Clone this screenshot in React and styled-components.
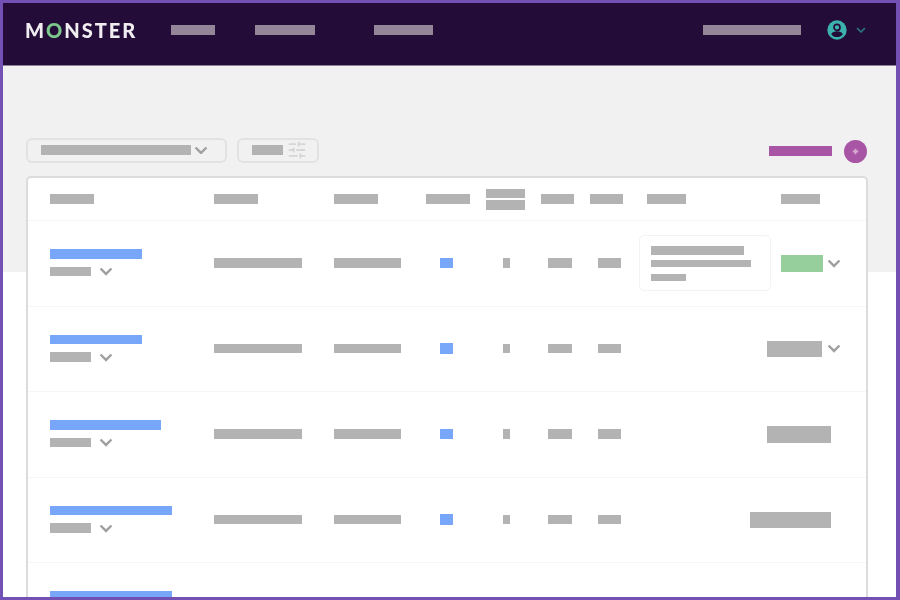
import React from "react";
import styled, { createGlobalStyle } from "styled-components";
import { SlidersHorizontal } from "lucide-react";

const rows = [
  { link: 92, status: { w: 42, h: 16.5, green: true, chevron: true }, note: true },
  { link: 92, status: { w: 54.5, h: 16.5, chevron: true, gap: 5.5 } },
  { link: 111, status: { w: 64, h: 16.5, pr: 10 } },
  { link: 122, status: { w: 81, h: 16.5, pr: 10 } },
  { link: 122 },
];

const heads = [
  { w: 44 },
  { w: 44 },
  { w: 44 },
  { w: 44 },
  { w: 39, double: true },
  { w: 32.5 },
  { w: 32.5 },
  { w: 38.5 },
  { w: 38.5 },
];

const Chevron = ({ size = 14, color = "#a0a0a0", stroke = 2.4 }) => (
  <ChevronSvg width={size} height={size * 0.64} viewBox="0 0 14 9" fill="none">
    <polyline points="1.5,1.5 7,7 12.5,1.5" stroke={color} strokeWidth={stroke} />
  </ChevronSvg>
);

const UserIcon = () => (
  <svg width="20" height="20" viewBox="0 0 20 20">
    <circle cx="10" cy="10" r="9.7" fill="#3db2ad" />
    <circle cx="10" cy="7.4" r="3" fill="#3db2ad" stroke="#230c37" strokeWidth="1.7" />
    <path d="M4.2 14.2c1-2.2 3.2-3 5.8-3s4.800.8 5.800 3c-1.400 1.900-3.400 2.900-5.800 2.900s-4.400-1-5.800-2.900z" fill="#230c37" />
  </svg>
);

const App = () => {
  return (
    <Frame>
      <GlobalStyle />
      <Content>
        <TopBar>
          <Logo>
            M<LogoO>O</LogoO>NSTER
          </Logo>
          <NavItems>
            <NavBar $w={44} />
            <NavBar $w={60} />
            <NavBar $w={59} $ml={19} />
          </NavItems>
          <Account>
            <NavBar $w={98} />
            <UserIcon />
            <Chevron size={10} color="#2b6f7c" stroke={2.4} />
          </Account>
        </TopBar>

        <Main>
          <Toolbar>
            <SelectBox>
              <GreyBar $w={150} $h={9.5} />
              <Chevron />
            </SelectBox>
            <FilterBox>
              <GreyBar $w={31} $h={9.5} />
              <SlidersHorizontal size={20} color="#d6d6d6" strokeWidth={2.2} />
            </FilterBox>
            <AddAction>
              <AddBar />
              <AddButton>
                <svg width="7" height="7" viewBox="0 0 7 7">
                  <path d="M3.500.8v5.400M.8 3.500h5.400" stroke="#d9a9d6" strokeWidth="1.8" />
                </svg>
              </AddButton>
            </AddAction>
          </Toolbar>

          <Card>
            <HeadRow>
              {heads.map((h, i) => (
                <HeadCell key={i}>
                  <GreyBar $w={h.w} $h={9.5} />
                  {h.double && <GreyBar $w={h.w} $h={9.5} />}
                </HeadCell>
              ))}
            </HeadRow>

            {rows.map((row, i) => (
              <Row key={i}>
                <TitleCell>
                  <LinkBar $w={row.link} />
                  <SubLine>
                    <GreyBar $w={41} $h={9.5} />
                    <Chevron />
                  </SubLine>
                </TitleCell>
                <GreyBar $w={88} $h={9.5} />
                <GreyBar $w={67} $h={9.5} />
                <BlueSquare />
                <GreyBar $w={7.5} $h={9.5} $ml={16.5} />
                <GreyBar $w={23.5} $h={9.5} $ml={7} />
                <GreyBar $w={23.5} $h={9.5} $ml={7.5} />
                <div>
                  {row.note && (
                    <Note>
                      <GreyBar $w={93} $h={9} />
                      <NoteGap />
                      <GreyBar $w={100} $h={7} />
                      <NoteGap $wide />
                      <GreyBar $w={35} $h={7} />
                    </Note>
                  )}
                </div>
                {row.status && (
                  <StatusCell $gap={row.status.gap} $pr={row.status.pr}>
                    <StatusPill $w={row.status.w} $h={row.status.h} $green={row.status.green} />
                    {row.status.chevron && <Chevron />}
                  </StatusCell>
                )}
              </Row>
            ))}
          </Card>
        </Main>
      </Content>
    </Frame>
  );
};

export default App;

const GlobalStyle = createGlobalStyle`
  html, body {
    margin: 0;
    padding: 0;
    background: #fff;
  }
`;

const Frame = styled.div`
  box-sizing: border-box;
  width: 900px;
  height: 600px;
  overflow: hidden;
  border-style: solid;
  border-color: #7350b3;
  border-width: 3px 4px 3px 3px;
  background: linear-gradient(#f1f1f1 0, #f1f1f1 269px, #fff 269px);
`;

/* runs past the frame so the soft edge of the blur gets clipped */
const Content = styled.div`
  margin: -3px -4px 0 -3px;
  filter: blur(0.6px);
`;

const TopBar = styled.header`
  box-sizing: border-box;
  height: 66px;
  display: flex;
  align-items: center;
  padding: 3px 34px 8px 25px;
  background: #230c37;
  border-bottom: 1px solid #8d8298;
`;

const Logo = styled.div`
  width: 146px;
  font-family: "Lato", "Liberation Sans", sans-serif;
  font-weight: 900;
  font-size: 20px;
  letter-spacing: 2px;
  color: #efedf0;
`;

const LogoO = styled.span`
  color: #7cc78a;
`;

const NavItems = styled.nav`
  display: flex;
  gap: 40px;
`;

const NavBar = styled.div`
  width: ${(p) => p.$w}px;
  height: 9.5px;
  margin-left: ${(p) => p.$ml || 0}px;
  background: #948598;
`;

const Account = styled.div`
  margin-left: auto;
  display: flex;
  align-items: center;

  & > svg:nth-of-type(1) {
    margin-left: 26px;
  }
  & > svg:nth-of-type(2) {
    margin-left: 9px;
  }
`;

const ChevronSvg = styled.svg`
  display: block;
  flex: none;
`;

const Main = styled.main`
  padding: 71px 32px 0 26px;
`;

const Toolbar = styled.div`
  display: flex;
  align-items: center;
  height: 26px;
  margin-bottom: 13px;
`;

const SelectBox = styled.div`
  box-sizing: border-box;
  width: 201px;
  height: 25px;
  display: flex;
  align-items: center;
  gap: 3px;
  padding-left: 13px;
  border: 2px solid #e2e2e2;
  border-radius: 6px;
`;

const FilterBox = styled(SelectBox)`
  width: 82px;
  margin-left: 10px;
  gap: 4px;
`;

const AddAction = styled.div`
  margin-left: auto;
  margin-top: 2px;
  margin-right: 1px;
  display: flex;
  align-items: center;
  gap: 12px;
`;

const AddBar = styled.div`
  width: 63px;
  height: 10px;
  background: #a855a5;
`;

const AddButton = styled.div`
  width: 23px;
  height: 23px;
  border-radius: 50%;
  background: #a855a5;
  display: flex;
  align-items: center;
  justify-content: center;
`;

const GreyBar = styled.div`
  flex: none;
  width: ${(p) => p.$w}px;
  height: ${(p) => p.$h}px;
  margin-left: ${(p) => p.$ml || 0}px;
  background: #b3b3b3;
`;

const Card = styled.section`
  background: #fff;
  border: 2px solid #dcdcdc;
  border-bottom: none;
  border-radius: 5px 5px 0 0;
`;

const columns = "164px 120px 92px 60px 55px 49px 57px 134px 60px";

const HeadRow = styled.div`
  box-sizing: border-box;
  display: grid;
  grid-template-columns: ${columns};
  align-items: center;
  height: 43px;
  padding-left: 22px;
  border-bottom: 1px solid #f6f6f6;
`;

const HeadCell = styled.div`
  display: flex;
  flex-direction: column;
  gap: 2px;
`;

const Row = styled.div`
  box-sizing: border-box;
  display: grid;
  grid-template-columns: ${columns};
  align-items: center;
  height: 85.5px;
  padding-left: 22px;
  padding-bottom: 1px;
  border-bottom: 1px solid #f6f6f6;
`;

const TitleCell = styled.div`
  display: flex;
  flex-direction: column;
  gap: 8px;
`;

const LinkBar = styled.div`
  width: ${(p) => p.$w}px;
  height: 9.5px;
  background: #78a6f9;
`;

const SubLine = styled.div`
  display: flex;
  align-items: flex-end;
  gap: 8px;
`;

const BlueSquare = styled.div`
  width: 13px;
  height: 10.5px;
  margin-left: 14px;
  background: #78a6f9;
`;

const Note = styled.div`
  box-sizing: border-box;
  width: 132px;
  height: 56px;
  margin: 1px 0 0 -8px;
  padding-left: 11px;
  display: flex;
  flex-direction: column;
  justify-content: center;
  background: #fff;
  border: 1px solid #f3f3f3;
  border-radius: 5px;
`;

const NoteGap = styled.div`
  height: ${(p) => (p.$wide ? 7 : 5)}px;
`;

const StatusCell = styled.div`
  display: flex;
  align-items: center;
  justify-content: flex-end;
  gap: ${(p) => p.$gap || 4}px;
  padding-right: ${(p) => p.$pr || 0}px;
  margin-top: 1px;
`;

const StatusPill = styled.div`
  flex: none;
  width: ${(p) => p.$w}px;
  height: ${(p) => p.$h}px;
  background: ${(p) => (p.$green ? "#96cf9b" : "#b3b3b3")};
`;
